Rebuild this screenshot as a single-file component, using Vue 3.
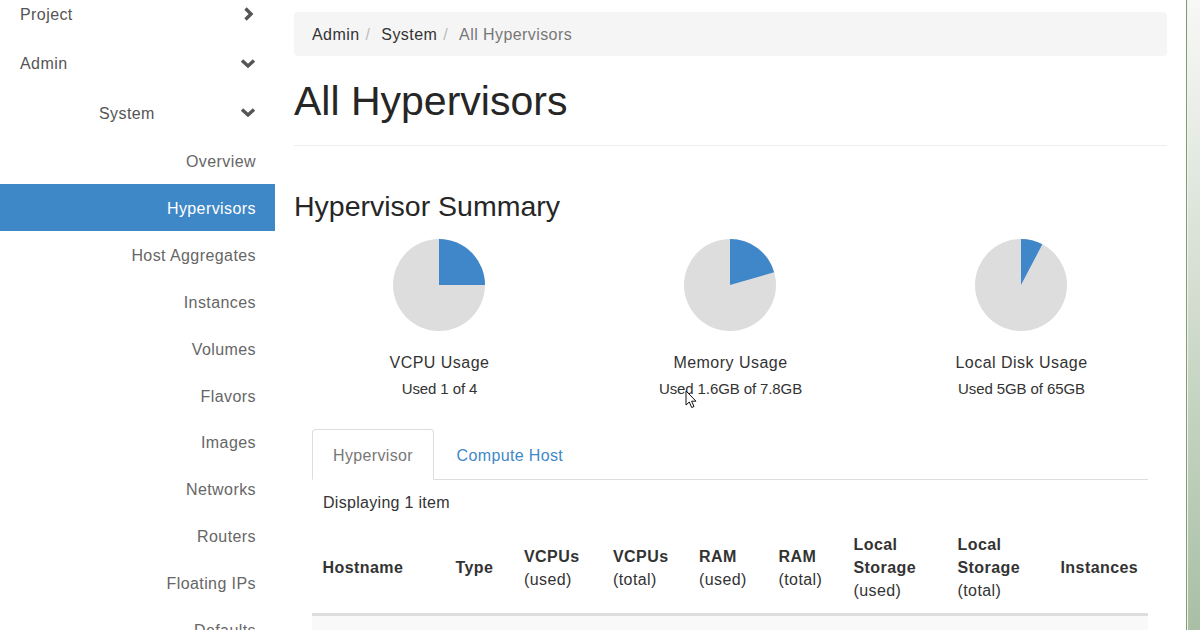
<script setup>
const nav = [
  { label: 'Overview' },
  { label: 'Hypervisors', active: true },
  { label: 'Host Aggregates' },
  { label: 'Instances' },
  { label: 'Volumes' },
  { label: 'Flavors' },
  { label: 'Images' },
  { label: 'Networks' },
  { label: 'Routers' },
  { label: 'Floating IPs' },
  { label: 'Defaults' },
]

const r = 46
function slice(frac) {
  const a = frac * 2 * Math.PI
  const x = r + r * Math.sin(a)
  const y = r - r * Math.cos(a)
  return `M${r} ${r}L${r} 0A${r} ${r} 0 0 1 ${x.toFixed(2)} ${y.toFixed(2)}Z`
}

const charts = [
  { title: 'VCPU Usage', text: 'Used 1 of 4', frac: 1 / 4 },
  { title: 'Memory Usage', text: 'Used 1.6GB of 7.8GB', frac: 1.6 / 7.8 },
  { title: 'Local Disk Usage', text: 'Used 5GB of 65GB', frac: 5 / 65 },
]

const columns = [
  ['Hostname'],
  ['Type'],
  ['VCPUs', '(used)'],
  ['VCPUs', '(total)'],
  ['RAM', '(used)'],
  ['RAM', '(total)'],
  ['Local', 'Storage', '(used)'],
  ['Local', 'Storage', '(total)'],
  ['Instances'],
]
</script>

<template>
  <div class="page">
    <aside class="sidebar">
      <a class="row top">
        <span>Project</span>
        <svg class="chev" width="16" height="16" viewBox="0 0 16 16"><path d="M5.5 2.5 11 8l-5.500 5.500" /></svg>
      </a>
      <a class="row top">
        <span>Admin</span>
        <svg class="chev" width="16" height="16" viewBox="0 0 16 16"><path d="M2 5.500 8 11l6-5.500" /></svg>
      </a>
      <a class="row group">
        <span>System</span>
        <svg class="chev" width="16" height="16" viewBox="0 0 16 16"><path d="M2 5.500 8 11l6-5.500" /></svg>
      </a>
      <a v-for="item in nav" :key="item.label" class="row leaf" :class="{ active: item.active }">{{ item.label }}</a>
    </aside>

    <main class="main">
      <div class="crumbs">
        <a>Admin</a><i>/</i><a>System</a><i>/</i><span>All Hypervisors</span>
      </div>
      <h1>All Hypervisors</h1>
      <h2>Hypervisor Summary</h2>

      <div class="charts">
        <div v-for="c in charts" :key="c.title" class="chart">
          <svg width="92" height="92" viewBox="0 0 92 92">
            <circle cx="46" cy="46" r="46" fill="#dddddd" />
            <path :d="slice(c.frac)" fill="#3f87c9" />
          </svg>
          <div class="chart-title">{{ c.title }}</div>
          <div class="chart-text">{{ c.text }}</div>
        </div>
      </div>

      <div class="tabbed">
        <ul class="tabs">
          <li class="tab current">Hypervisor</li>
          <li class="tab">Compute Host</li>
        </ul>
        <div class="count">Displaying 1 item</div>
        <table>
          <thead>
            <tr>
              <th v-for="(col, i) in columns" :key="i">
                <div v-for="line in col" :key="line" :class="{ thin: line.startsWith('(') }">{{ line }}</div>
              </th>
            </tr>
          </thead>
          <tbody>
            <tr><td :colspan="columns.length"></td></tr>
          </tbody>
        </table>
      </div>
    </main>

    <div class="edge"></div>

    <svg class="cursor" width="13" height="19" viewBox="0 0 13 19">
      <path d="M1 1v14l3.300-3 2.400 5.500 2.300-1-2.400-5.300H11Z" fill="#fff" stroke="#111" stroke-width="1" />
    </svg>
  </div>
</template>

<style>
html, body { margin: 0; overflow: hidden; background: #fff; }
</style>

<style scoped>
.page {
  position: relative;
  display: flex;
  width: 1200px;
  height: 630px;
  overflow: hidden;
  font-family: "Liberation Sans", Arial, sans-serif;
  font-size: 16px;
  letter-spacing: 0.42px;
  color: #333;
}

.sidebar {
  flex: 0 0 275px;
  margin-top: -10px;
}
.row {
  box-sizing: border-box;
  display: flex;
  align-items: center;
  justify-content: flex-end;
  height: 46.850px;
  padding: 0 19px 0 20px;
  color: #666;
}
.top { justify-content: space-between; height: 48.500px; color: #555; }
.top span { margin-top: 2px; }
.group { height: 50px; padding-left: 99px; justify-content: space-between; color: #555; }
.group span { margin-top: 4px; }
.leaf { padding-top: 4px; }
.leaf.active { background: #3f88c8; color: #fff; }
.chev { fill: none; stroke: #555; stroke-width: 3.400; }

.main {
  flex: 0 0 873px;
  min-width: 0;
  margin-left: 19px;
  padding-top: 12px;
}
.crumbs {
  box-sizing: border-box;
  display: flex;
  align-items: center;
  height: 44px;
  padding: 2px 0 0 18px;
  background: #f5f5f5;
  border-radius: 4px;
  color: #777;
}
.crumbs a { color: #333; }
.crumbs i { font-style: normal; color: #bbb; margin: 0 11px 0 6px; }
h1 {
  margin: 0;
  padding: 22px 0 20px;
  border-bottom: 1px solid #eee;
  font-size: 41px;
  line-height: 47px;
  font-weight: 400;
  letter-spacing: 0;
  color: #262626;
}
h2 {
  margin: 42px 0 0;
  font-size: 28.500px;
  line-height: 36px;
  font-weight: 400;
  letter-spacing: 0;
  color: #262626;
}

.charts {
  display: grid;
  grid-template-columns: repeat(3, 1fr);
  margin-top: 15px;
}
.chart {
  display: flex;
  flex-direction: column;
  align-items: center;
}
.chart svg { display: block; margin-right: 2px; }
.chart-title { margin-top: 22px; line-height: 20px; letter-spacing: 0.48px; }
.chart-text { margin-top: 6px; line-height: 20px; font-size: 15px; letter-spacing: -0.1px; }

.tabbed { margin: 30px 19px 0 18px; }
.tabs {
  display: flex;
  gap: 2px;
  margin: 0;
  padding: 0;
  list-style: none;
  border-bottom: 1px solid #ddd;
}
.tab {
  padding: 15px 20px 13px;
  line-height: 21px;
  letter-spacing: 0.36px;
  color: #3f88c8;
  margin-bottom: -1px;
  border: 1px solid transparent;
  border-radius: 4px 4px 0 0;
}
.tab.current {
  padding-right: 19.500px;
  color: #777;
  background: #fff;
  border-color: #ddd #ddd #fff;
}
.count { padding: 13px 11px 0; line-height: 20px; letter-spacing: 0.3px; }

table {
  width: 100%;
  margin-top: 20px;
  table-layout: fixed;
  border-collapse: collapse;
}
th {
  box-sizing: border-box;
  padding: 0 0 11px 10.500px;
  vertical-align: middle;
  text-align: left;
  font-weight: 700;
  line-height: 23px;
  color: #333;
  border-bottom: 3px solid #ddd;
}
th .thin { font-weight: 400; }
th:nth-child(1) { width: 133px; }
th:nth-child(2) { width: 68.500px; }
th:nth-child(3) { width: 89px; }
th:nth-child(4) { width: 86px; }
th:nth-child(5) { width: 79.500px; }
th:nth-child(6) { width: 75px; }
th:nth-child(7) { width: 104px; }
th:nth-child(8) { width: 103px; }
td { height: 40px; padding: 0; background: #f9f9f9; }

.edge {
  position: absolute;
  top: 0;
  right: 0;
  bottom: 0;
  width: 13px;
  border-left: 1px solid #7f9f72;
  box-shadow: inset 1px 0 0 #eef3ea;
  background: linear-gradient(#f8f8f6, #a9bfa5);
}
.cursor {
  position: absolute;
  left: 685px;
  top: 390px;
}
</style>
